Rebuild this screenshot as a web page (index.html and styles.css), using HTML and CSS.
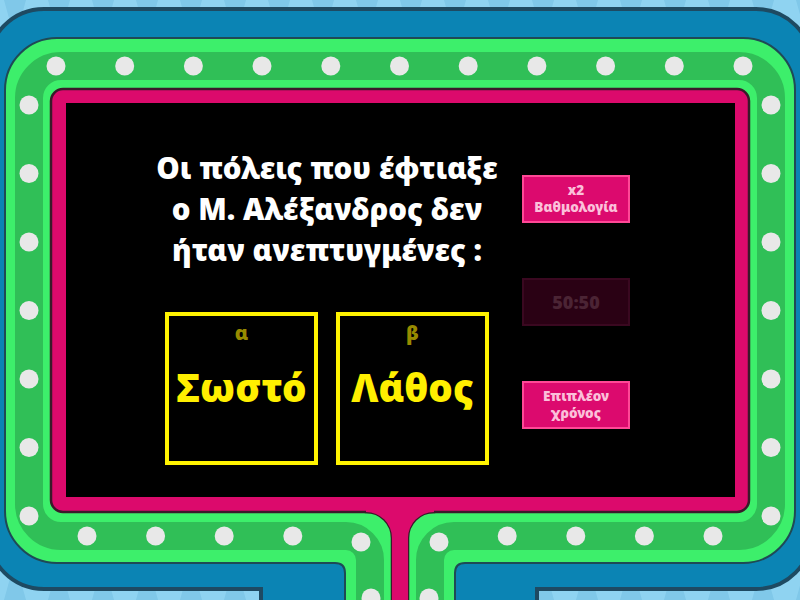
FILE: index.html
```html
<!DOCTYPE html>
<html lang="el">
<head>
<meta charset="utf-8">
<title>Quiz</title>
<link rel="stylesheet" href="styles.css">
</head>
<body>
<div class="stage">
  <svg class="frame" viewBox="0 0 800 600" width="800" height="600" aria-hidden="true">
    <defs>
      <pattern id="spikes" x="0" y="0" width="44" height="600" patternUnits="userSpaceOnUse">
        <polygon points="4,0 26,0 15,40" fill="#80c8e9"/>
        <polygon points="4,600 26,600 15,560" fill="#80c8e9"/>
      </pattern>
    </defs>
    <rect x="0" y="0" width="800" height="600" fill="#8fd3f1"/>
    <rect x="0" y="0" width="800" height="600" fill="url(#spikes)"/>

    <!-- outer blue body -->
    <rect x="261" y="560" width="276" height="60" fill="#0b84b4" stroke="#1e4a62" stroke-width="4"/>
    <rect x="-12" y="9" width="824" height="580" rx="56" fill="#0b84b4" stroke="#1e4a62" stroke-width="4"/>
    <rect x="263" y="570" width="272" height="40" fill="#0b84b4"/>

    <!-- green ring with stem -->
    <path d="M5,90 A52,52 0 0 1 57,38 L743,38 A52,52 0 0 1 795,90 L795,511 A52,52 0 0 1 743,563 L465,563 Q455,563 455,573 L455,612 L345,612 L345,573 Q345,563 335,563 L57,563 A52,52 0 0 1 5,511 Z"
          fill="#3def6b" stroke="#1f4a55" stroke-width="2"/>
    <path d="M370,612 L370,560 A24,24 0 0 0 346,536 L61,536 A32,32 0 0 1 29,504 L29,98 A32,32 0 0 1 61,66 L739,66 A32,32 0 0 1 771,98 L771,504 A32,32 0 0 1 739,536 L454,536 A24,24 0 0 0 430,560 L430,612"
          fill="none" stroke="#30bf57" stroke-width="28"/>

    <!-- light bulbs -->
    <g fill="#e8e8e8">
      <circle cx="56" cy="66" r="9.5"/><circle cx="124.7" cy="66" r="9.5"/><circle cx="193.4" cy="66" r="9.5"/>
      <circle cx="262" cy="66" r="9.5"/><circle cx="330.8" cy="66" r="9.5"/><circle cx="399.5" cy="66" r="9.5"/>
      <circle cx="468.2" cy="66" r="9.5"/><circle cx="536.9" cy="66" r="9.5"/><circle cx="605.6" cy="66" r="9.5"/>
      <circle cx="674.3" cy="66" r="9.5"/><circle cx="743" cy="66" r="9.5"/>
      <circle cx="29" cy="105" r="9.5"/><circle cx="29" cy="173.5" r="9.5"/><circle cx="29" cy="242" r="9.5"/>
      <circle cx="29" cy="310.5" r="9.5"/><circle cx="29" cy="379" r="9.5"/><circle cx="29" cy="447.5" r="9.5"/>
      <circle cx="29" cy="516" r="9.5"/>
      <circle cx="771" cy="105" r="9.5"/><circle cx="771" cy="173.5" r="9.5"/><circle cx="771" cy="242" r="9.5"/>
      <circle cx="771" cy="310.5" r="9.5"/><circle cx="771" cy="379" r="9.5"/><circle cx="771" cy="447.5" r="9.5"/>
      <circle cx="771" cy="516" r="9.5"/>
      <circle cx="87" cy="536" r="9.5"/><circle cx="155.6" cy="536" r="9.5"/><circle cx="224.2" cy="536" r="9.5"/>
      <circle cx="292.8" cy="536" r="9.5"/><circle cx="361" cy="542" r="9.5"/>
      <circle cx="439" cy="542" r="9.5"/><circle cx="507.2" cy="536" r="9.5"/><circle cx="575.8" cy="536" r="9.5"/>
      <circle cx="644.4" cy="536" r="9.5"/><circle cx="713" cy="536" r="9.5"/>
      <circle cx="371" cy="598" r="9.5"/><circle cx="429" cy="598" r="9.5"/>
    </g>

    <!-- pink frame + stem -->
    <path d="M366,505 L434,505 L434,512 A26,26 0 0 0 408,538 L408,612 L392,612 L392,538 A26,26 0 0 0 366,512 Z"
          fill="#dc0a6c" stroke="#3a1a2a" stroke-width="2.5"/>
    <rect x="51" y="89" width="698" height="423" rx="12" fill="#dc0a6c" stroke="#3a1a2a" stroke-width="2.5"/>
    <path d="M366,505 L434,505 L434,512 A26,26 0 0 0 408,538 L408,612 L392,612 L392,538 A26,26 0 0 0 366,512 Z"
          fill="#dc0a6c"/>
    <rect x="66" y="103" width="669" height="394" fill="#000"/>
  </svg>

  <main class="screen">
    <section class="play">
      <h1 class="question">Οι πόλεις που έφτιαξε<br>ο Μ. Αλέξανδρος δεν<br>ήταν ανεπτυγμένες :</h1>
      <div class="answers">
        <div class="answer"><span class="key">α</span><span class="text">Σωστό</span></div>
        <div class="answer"><span class="key">β</span><span class="text">Λάθος</span></div>
      </div>
    </section>
    <aside class="powerups">
      <button class="power">x2<br>Βαθμολογία</button>
      <button class="power off">50:50</button>
      <button class="power">Επιπλέον<br>χρόνος</button>
    </aside>
  </main>
</div>
</body>
</html>
```

FILE: styles.css
```css
html, body {
  margin: 0;
  padding: 0;
  background: #8fd3f1;
}

.stage {
  position: relative;
  width: 800px;
  height: 600px;
  overflow: hidden;
  box-sizing: border-box;
  padding: 103px 0 0 66px;
  font-family: "Noto Sans", "Open Sans", "DejaVu Sans", sans-serif;
}

.frame {
  position: absolute;
  top: 0;
  left: 0;
  display: block;
}

.screen {
  position: relative;
  width: 669px;
  height: 394px;
  display: flex;
}

.play {
  width: 374px;
  margin-left: 74px;
  padding-top: 44px;
  display: flex;
  flex-direction: column;
  align-items: center;
}

.question {
  margin: 0;
  color: #ffffff;
  font-size: 29.5px;
  font-weight: 900;
  line-height: 41px;
  text-align: center;
  white-space: nowrap;
}

.answers {
  margin-top: 42px;
  display: flex;
  gap: 18px;
}

.answer {
  width: 153px;
  height: 153px;
  box-sizing: border-box;
  border: 4px solid #fff200;
  display: flex;
  flex-direction: column;
  align-items: center;
}

.key {
  margin-top: 4px;
  color: #978a00;
  font-size: 20px;
  font-weight: 900;
  line-height: 26px;
}

.text {
  margin-top: 17px;
  color: #ffef00;
  font-size: 38.5px;
  font-weight: 900;
  line-height: 48px;
  white-space: nowrap;
}

.powerups {
  margin-left: 8px;
  padding-top: 72px;
  display: flex;
  flex-direction: column;
  gap: 55px;
}

.power {
  width: 108px;
  height: 48px;
  padding: 0;
  box-sizing: border-box;
  background: #dc0a6e;
  border: 2px solid #ff4896;
  color: #fbc0da;
  font-family: inherit;
  font-size: 13.5px;
  font-weight: 900;
  line-height: 17px;
  text-align: center;
}

.power.off {
  background: #2a0114;
  border-color: #3a0820;
  color: #4b2434;
  font-size: 18px;
}
```
